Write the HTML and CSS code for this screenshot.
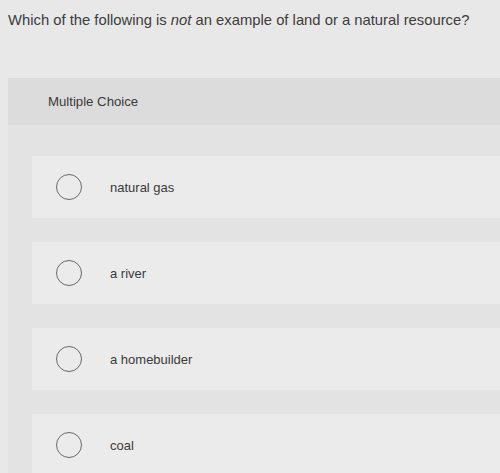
FILE: index.html
```html
<!DOCTYPE html>
<html>
<head>
<meta charset="utf-8">
<link rel="stylesheet" href="styles.css">
</head>
<body>
<div class="question">Which of the following is <em>not</em> an example of land or a natural resource?</div>
<div class="panel">
  <div class="header">Multiple Choice</div>
  <div class="options">
    <div class="option"><div class="card"><span class="radio"></span><span class="label">natural gas</span></div></div>
    <div class="option"><div class="card"><span class="radio"></span><span class="label">a river</span></div></div>
    <div class="option"><div class="card"><span class="radio"></span><span class="label">a homebuilder</span></div></div>
    <div class="option"><div class="card"><span class="radio"></span><span class="label">coal</span></div></div>
  </div>
</div>
</body>
</html>
```
FILE: styles.css
```css
html, body {
  margin: 0;
  padding: 0;
  background: #e8e8e8;
  font-family: "Liberation Sans", Arial, sans-serif;
  color: #3a3a3a;
  overflow: hidden;
}
.question {
  height: 78px;
  box-sizing: border-box;
  padding: 12px 0 0 8px;
  font-size: 14.8px;
  white-space: nowrap;
  color: #3c3c3c;
}
.question em {
  font-style: italic;
}
.panel {
  margin-left: 8px;
  background: #e2e2e2;
}
.header {
  height: 47px;
  box-sizing: border-box;
  background: #dcdcdc;
  padding: 16px 0 0 40px;
  font-size: 13.2px;
  color: #3a3a3a;
}
.options {
  padding: 19px 0 0 24px;
  background: #e3e3e3;
}
.option {
  height: 86px;
  display: flex;
  align-items: center;
}
.card {
  flex: 1;
  height: 62px;
  background: #ebebeb;
  display: flex;
  align-items: center;
  padding-left: 24px;
}
.radio {
  width: 24px;
  height: 24px;
  border: 1.5px solid #6a6a6a;
  border-radius: 50%;
  box-sizing: content-box;
  flex: none;
}
.label {
  margin-left: 28px;
  font-size: 13px;
  color: #3a3a3a;
}
```
